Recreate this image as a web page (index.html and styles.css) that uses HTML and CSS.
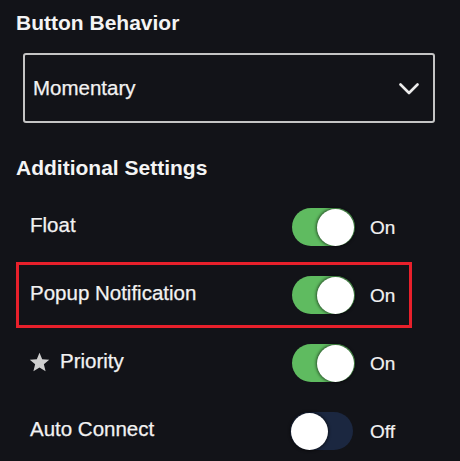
FILE: index.html
```html
<!DOCTYPE html>
<html lang="en">
<head>
<meta charset="utf-8">
<title>Button Settings</title>
<link rel="stylesheet" href="styles.css">
</head>
<body>
<div class="panel">
  <h2 class="heading">Button Behavior</h2>
  <div class="select">
    <span class="select-value">Momentary</span>
    <svg class="chevron" width="20" height="12" viewBox="0 0 20 12" aria-hidden="true">
      <polyline points="1.5,1.5 10,10 18.5,1.5" fill="none" stroke="#ececec" stroke-width="2.6" stroke-linecap="round" stroke-linejoin="round"/>
    </svg>
  </div>

  <h2 class="heading heading-second">Additional Settings</h2>
  <div class="rows">
    <div class="row">
      <span class="label">Float</span>
      <span class="toggle on"><span class="knob"></span></span>
      <span class="status">On</span>
    </div>
    <div class="row highlight">
      <span class="label">Popup Notification</span>
      <span class="toggle on"><span class="knob"></span></span>
      <span class="status">On</span>
    </div>
    <div class="row">
      <span class="label label-star">
        <svg class="star" width="21" height="20" viewBox="0 0 24 23" aria-hidden="true">
          <polygon points="12,0.8 15.1,8.3 23.2,8.9 17,14.1 19,22 12,17.7 5,22 7,14.1 0.8,8.9 8.9,8.3" fill="#cfcfcf"/>
        </svg>
        Priority
      </span>
      <span class="toggle on"><span class="knob"></span></span>
      <span class="status">On</span>
    </div>
    <div class="row">
      <span class="label">Auto Connect</span>
      <span class="toggle off"><span class="knob"></span></span>
      <span class="status">Off</span>
    </div>
  </div>
</div>
</body>
</html>
```

FILE: styles.css
```css
html, body {
  margin: 0;
  padding: 0;
}

body {
  background: #121318;
  color: #f2f2f2;
  font-family: "Liberation Sans", Arial, sans-serif;
  width: 460px;
  height: 461px;
  overflow: hidden;
}

.panel {
  display: flex;
  flex-direction: column;
  align-items: flex-start;
}

.heading {
  margin: 11px 0 0 16px;
  font-size: 21px;
  line-height: 24px;
  font-weight: 700;
  color: #f4f4f4;
}

.heading-second {
  margin-top: 33px;
}

.select {
  box-sizing: border-box;
  margin: 18px 0 0 23px;
  width: 412px;
  height: 70px;
  border: 2px solid #c4c4c4;
  border-radius: 3px;
  display: flex;
  align-items: center;
  justify-content: space-between;
  padding: 0 14px 0 8px;
  font-size: 20.5px;
  -webkit-text-stroke: 0.25px #f2f2f2;
}

.chevron {
  display: block;
  margin-top: 2px;
}

.rows {
  margin: 14px 0 0 16px;
  width: 396px;
  display: flex;
  flex-direction: column;
  gap: 2px;
}

.row {
  box-sizing: border-box;
  height: 66px;
  border: 3px solid transparent;
  padding-left: 11px;
  display: grid;
  grid-template-columns: 248px 64px auto;
  column-gap: 14px;
  align-items: center;
}

.row.highlight {
  border-color: #e8202b;
}

.label {
  font-size: 20.5px;
  line-height: 24px;
  padding-bottom: 5px;
  -webkit-text-stroke: 0.25px #f2f2f2;
}

.label-star {
  display: flex;
  align-items: center;
  gap: 10px;
  margin-left: -1px;
}

.star {
  display: block;
  margin-top: 3px;
}

.toggle {
  box-sizing: border-box;
  width: 63px;
  height: 38px;
  border-radius: 19px;
  display: flex;
  align-items: center;
  padding: 0 1px;
}

.toggle.on {
  background: #5fbb60;
  justify-content: flex-end;
}

.toggle.off {
  background: #1b2740;
  justify-content: flex-start;
  margin-left: -2px;
}

.knob {
  width: 37px;
  height: 37px;
  border-radius: 50%;
  background: #ffffff;
  box-shadow: 0 0 3px 1px rgba(0, 0, 0, 0.55);
}

.status {
  font-size: 19px;
  line-height: 22px;
  padding-top: 2px;
  -webkit-text-stroke: 0.2px #f2f2f2;
}
```
